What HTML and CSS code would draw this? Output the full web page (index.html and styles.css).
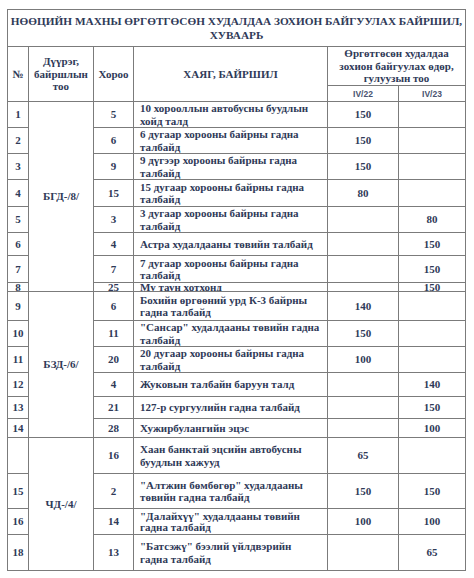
FILE: index.html
```html
<!DOCTYPE html>
<html lang="mn">
<head>
<meta charset="utf-8">
<title>Хуваарь</title>
<link rel="stylesheet" href="styles.css">
</head>
<body>
<table class="sched">
  <colgroup>
    <col class="c-no"><col class="c-dist"><col class="c-kh"><col class="c-addr"><col class="c-d1"><col class="c-d2">
  </colgroup>
  <tr class="r-title">
    <td class="title" colspan="6">НӨӨЦИЙН МАХНЫ ӨРГӨТГӨСӨН ХУДАЛДАА ЗОХИОН БАЙГУУЛАХ БАЙРШИЛ,<br>ХУВААРЬ</td>
  </tr>
  <tr class="r-head1">
    <th rowspan="2">№</th>
    <th rowspan="2">Дүүрэг,<br>байршлын<br>тоо</th>
    <th rowspan="2">Хороо</th>
    <th rowspan="2">ХАЯГ, БАЙРШИЛ</th>
    <th colspan="2">Өргөтгөсөн худалдаа<br>зохион байгуулах өдөр,<br>гулуузын тоо</th>
  </tr>
  <tr class="r-head2">
    <th class="date">IV/22</th>
    <th class="date">IV/23</th>
  </tr>
  <tr class="h26">
    <td class="n">1</td>
    <td class="dist" rowspan="8">БГД-/8/</td>
    <td class="n">5</td>
    <td class="addr">10 хорооллын автобусны буудлын<br>хойд талд</td>
    <td class="n">150</td><td class="n"></td>
  </tr>
  <tr class="h26">
    <td class="n">2</td><td class="n">6</td>
    <td class="addr">6 дугаар хорооны байрны гадна<br>талбайд</td>
    <td class="n">150</td><td class="n"></td>
  </tr>
  <tr class="h26">
    <td class="n">3</td><td class="n">9</td>
    <td class="addr">9 дүгээр хорооны байрны гадна<br>талбайд</td>
    <td class="n">150</td><td class="n"></td>
  </tr>
  <tr class="h27">
    <td class="n">4</td><td class="n">15</td>
    <td class="addr">15 дугаар хорооны байрны гадна<br>талбайд</td>
    <td class="n">80</td><td class="n"></td>
  </tr>
  <tr class="h26">
    <td class="n">5</td><td class="n">3</td>
    <td class="addr">3 дугаар хорооны байрны гадна<br>талбайд</td>
    <td class="n"></td><td class="n">80</td>
  </tr>
  <tr class="h23">
    <td class="n">6</td><td class="n">4</td>
    <td class="addr">Астра худалдааны төвийн талбайд</td>
    <td class="n"></td><td class="n">150</td>
  </tr>
  <tr class="h27">
    <td class="n">7</td><td class="n">7</td>
    <td class="addr">7 дугаар хорооны байрны гадна<br>талбайд</td>
    <td class="n"></td><td class="n">150</td>
  </tr>
  <tr class="thin">
    <td class="n">8</td><td class="n">25</td>
    <td class="addr">Му таун хотхонд</td>
    <td class="n"></td><td class="n">150</td>
  </tr>
  <tr class="h29">
    <td class="n">9</td>
    <td class="dist" rowspan="6">БЗД-/6/</td>
    <td class="n">6</td>
    <td class="addr">Бохийн өргөөний урд К-3 байрны<br>гадна талбайд</td>
    <td class="n">140</td><td class="n"></td>
  </tr>
  <tr class="h26">
    <td class="n">10</td><td class="n">11</td>
    <td class="addr">"Сансар" худалдааны төвийн гадна<br>талбайд</td>
    <td class="n">150</td><td class="n"></td>
  </tr>
  <tr class="h26">
    <td class="n">11</td><td class="n">20</td>
    <td class="addr">20 дугаар хорооны байрны гадна<br>талбайд</td>
    <td class="n">100</td><td class="n"></td>
  </tr>
  <tr class="h24">
    <td class="n">12</td><td class="n">4</td>
    <td class="addr">Жуковын талбайн баруун талд</td>
    <td class="n"></td><td class="n">140</td>
  </tr>
  <tr class="h22">
    <td class="n">13</td><td class="n">21</td>
    <td class="addr">127-р сургуулийн гадна талбайд</td>
    <td class="n"></td><td class="n">150</td>
  </tr>
  <tr class="h19">
    <td class="n">14</td><td class="n">28</td>
    <td class="addr">Хужирбулангийн эцэс</td>
    <td class="n"></td><td class="n">100</td>
  </tr>
  <tr class="h36">
    <td class="n"></td>
    <td class="dist" rowspan="5">ЧД-/4/</td>
    <td class="n">16</td>
    <td class="addr">Хаан банктай эцсийн автобусны<br>буудлын хажууд</td>
    <td class="n">65</td><td class="n"></td>
  </tr>
  <tr class="h35">
    <td class="n">15</td><td class="n">2</td>
    <td class="addr">"Алтжин бөмбөгөр" худалдааны<br>төвийн гадна талбайд</td>
    <td class="n">150</td><td class="n">150</td>
  </tr>
  <tr class="h26 tight">
    <td class="n">16</td><td class="n">14</td>
    <td class="addr">"Далайхүү" худалдааны төвийн<br>гадна талбайд</td>
    <td class="n">100</td><td class="n">100</td>
  </tr>
  <tr class="h36">
    <td class="n">18</td><td class="n">13</td>
    <td class="addr">"Батсэжү" бээлий үйлдвэрийн<br>гадна талбайд</td>
    <td class="n"></td><td class="n">65</td>
  </tr>
</table>
</body>
</html>
```

FILE: styles.css
```css
html, body {
  margin: 0;
  padding: 0;
  background: #ffffff;
}

body {
  padding: 9px 0 0 7px;
}

.sched {
  border-collapse: collapse;
  table-layout: fixed;
  width: 458px;
  font-family: "Liberation Serif", "Times New Roman", serif;
  font-size: 11px;
  font-weight: bold;
  color: #2f3a58;
  line-height: 12.5px;
}

.c-no { width: 21px; }
.c-dist { width: 65px; }
.c-kh { width: 40px; }
.c-addr { width: 194px; }
.c-d1 { width: 71px; }
.c-d2 { width: 67px; }

.sched td,
.sched th {
  border: 1px solid #7b7b7b;
  padding: 0 4px;
  vertical-align: middle;
  text-align: center;
  font-weight: bold;
}

.sched td.title {
  height: 36px;
  padding: 0;
  font-size: 11.25px;
  line-height: 14px;
  text-align: center;
  white-space: nowrap;
}

.r-head1 { height: 39px; }
.r-head2 { height: 16px; }

.sched th.date {
  font-family: "Liberation Sans", Arial, sans-serif;
  font-size: 8.5px;
  color: #4a5470;
  line-height: 10px;
}

.sched td.addr {
  text-align: left;
  padding: 0 2px 0 6px;
  white-space: nowrap;
  overflow: hidden;
}

.h19 { height: 19px; }
.h22 { height: 22px; }
.h23 { height: 23px; }
.h24 { height: 24px; }
.h26 { height: 26px; }
.h27 { height: 27px; }
.h29 { height: 29px; }
.h35 { height: 35px; }
.h36 { height: 36px; }

.thin td {
  line-height: 8px;
  height: 8px;
  padding-top: 0;
  padding-bottom: 0;
}

.tight td {
  line-height: 11px;
}
```
